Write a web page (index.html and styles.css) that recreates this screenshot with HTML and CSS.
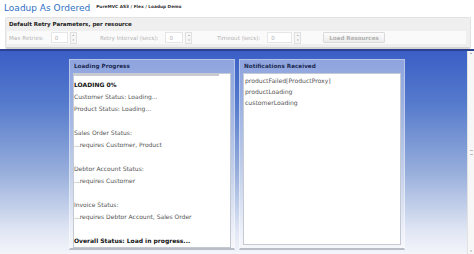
FILE: index.html
```html
<!DOCTYPE html>
<html lang="en">
<head>
    <meta charset="UTF-8">
    <title>Loadup As Ordered</title>
    <link rel="stylesheet" href="styles.css">
</head>
<body>
    <div class="top">
        <div class="title-row">
            <h1>Loadup As Ordered</h1>
            <span class="crumbs">PureMVC AS3 / Flex / Loadup Demo</span>
        </div>
        <div class="retry-panel">
            <div class="retry-title">Default Retry Parameters, per resource</div>
            <div class="retry-row">
                <div class="field field-retries">
                    <label>Max Retries:</label>
                    <span class="num w-17">0</span>
                    <span class="stepper"><i>&#9652;</i><i>&#9662;</i></span>
                </div>
                <div class="field field-interval">
                    <label>Retry Interval (secs):</label>
                    <span class="num w-18">0</span>
                    <span class="stepper"><i>&#9652;</i><i>&#9662;</i></span>
                </div>
                <div class="field field-timeout">
                    <label>Timeout (secs):</label>
                    <span class="num w-25">0</span>
                    <span class="stepper"><i>&#9652;</i><i>&#9662;</i></span>
                </div>
                <button class="load-button" disabled>Load Resources</button>
            </div>
        </div>
    </div>
    <div class="stage">
        <div class="main">
            <div class="panel">
                <div class="panel-title">Loading Progress</div>
                <div class="panel-body progress-body">
                    <div class="progress-bar"></div>
                    <p class="strong">LOADING 0%</p>
                    <p>Customer Status: Loading...</p>
                    <p>Product Status: Loading...</p>
                    <p>&nbsp;</p>
                    <p>Sales Order Status:</p>
                    <p>...requires Customer, Product</p>
                    <p>&nbsp;</p>
                    <p>Debtor Account Status:</p>
                    <p>...requires Customer</p>
                    <p>&nbsp;</p>
                    <p>Invoice Status:</p>
                    <p>...requires Debtor Account, Sales Order</p>
                    <p>&nbsp;</p>
                    <p class="strong">Overall Status: Load in progress...</p>
                </div>
            </div>
            <div class="panel">
                <div class="panel-title">Notifications Received</div>
                <ul class="panel-body notes">
                    <li>productFailed[ProductProxy]</li>
                    <li>productLoading</li>
                    <li>customerLoading</li>
                </ul>
            </div>
        </div>
        <div class="scrollbar">
            <span class="arrow">&#9652;</span>
            <span class="grip"></span>
            <span class="arrow">&#9662;</span>
        </div>
    </div>
</body>
</html>
```

FILE: styles.css
```css
body {
    margin: 0;
    width: 474px;
    height: 254px;
    overflow: hidden;
    font-family: "DejaVu Sans", Verdana, sans-serif;
    background-color: #fff;
    color: #333;
}
.top {
    height: 49px;
    background-color: #fff;
}
.title-row {
    display: flex;
    align-items: flex-start;
    height: 17px;
    padding-left: 4px;
}
h1 {
    margin: 3px 0 0;
    font-size: 9px;
    font-weight: normal;
    color: #2f6fc4;
    line-height: 11px;
}
.crumbs {
    margin: 4px 0 0 6px;
    font-size: 4.3px;
    font-weight: bold;
    color: #333;
}
.retry-panel {
    margin: 0 3px 0 5px;
    height: 29px;
    background-color: #efefef;
    border: 1px solid #e2e2e2;
    border-bottom: 2px solid #d4d4d4;
    border-radius: 2px;
}
.retry-title {
    height: 13px;
    padding-left: 3px;
    font-size: 5.5px;
    font-weight: bold;
    line-height: 13px;
    color: #222;
}
.retry-row {
    display: flex;
    align-items: center;
    height: 13px;
    margin: 0 4px 0 1px;
    padding-left: 2px;
    background-color: #fafafa;
    font-size: 5.6px;
    color: #b4b4b4;
}
.field {
    display: flex;
    align-items: center;
}
.field label {
    margin-right: 7px;
}
.field-retries {
    width: 91px;
}
.field-interval {
    width: 117px;
}
.field-timeout {
    width: 106px;
}
.num {
    height: 11px;
    line-height: 11px;
    padding-left: 3px;
    box-sizing: border-box;
    background-color: #fff;
    border: 1px solid #e6e6e6;
}
.w-17 {
    width: 17px;
}
.w-18 {
    width: 18px;
}
.w-25 {
    width: 25px;
}
.stepper {
    display: flex;
    flex-direction: column;
    width: 5px;
    height: 10px;
    margin-left: 2px;
    border: 1px solid #e0e0e0;
    background-color: #f6f6f6;
}
.stepper i {
    flex: 1;
    font-style: normal;
    font-size: 3px;
    line-height: 5px;
    text-align: center;
    color: #999;
}
.load-button {
    height: 11px;
    width: 62px;
    padding: 0;
    font-family: inherit;
    font-size: 5.6px;
    font-weight: bold;
    color: #b0b0b0;
    background: linear-gradient(#fdfdfd, #ececec);
    border: 1px solid #dadada;
    border-radius: 1px;
}
.stage {
    display: flex;
    height: 203px;
    border-top: 2px solid #2b418f;
}
.main {
    flex: 1;
    display: flex;
    gap: 4px;
    padding: 8px 0 0 69px;
    background: linear-gradient(#3b5fc6 0%, #5479cc 25%, #98afdc 60%, #dfe5f3 88%, #f3f5fa 100%);
}
.panel {
    display: flex;
    flex-direction: column;
    width: 166px;
    height: 191px;
    box-sizing: border-box;
    padding: 0 3px 3px;
    background-color: rgba(255, 255, 255, 0.42);
    border: 1px solid rgba(255, 255, 255, 0.35);
    border-bottom: 2px solid #b9bdc6;
}
.panel-title {
    height: 13px;
    padding-left: 1px;
    font-size: 5.7px;
    font-weight: bold;
    line-height: 13px;
    color: #1c2a52;
}
.panel-body {
    flex: 1;
    margin: 0;
    background-color: #fff;
    border: 1px solid #c4c9d4;
}
.progress-body {
    padding: 0;
    font-size: 6px;
    color: #555;
}
.progress-bar {
    width: 145px;
    height: 2px;
    background-color: #c9cbd0;
}
.progress-body p {
    margin: 0;
    height: 12px;
    line-height: 12px;
}
.progress-body p:first-of-type {
    margin-top: 3px;
}
.strong {
    font-weight: bold;
    color: #111;
}
.notes {
    list-style-type: none;
    padding: 1px 0 0 1px;
    font-size: 6.1px;
    color: #555;
}
.notes li {
    height: 11px;
    line-height: 11px;
}
.scrollbar {
    display: flex;
    flex-direction: column;
    align-items: center;
    justify-content: space-between;
    width: 6px;
    background-color: #f7f7f7;
    border-left: 1px solid #e2e2e2;
    font-size: 3px;
    line-height: 5px;
    color: #777;
}
.grip {
    width: 3px;
    height: 3px;
    border-top: 1px solid #bbb;
    border-bottom: 1px solid #bbb;
}
```
